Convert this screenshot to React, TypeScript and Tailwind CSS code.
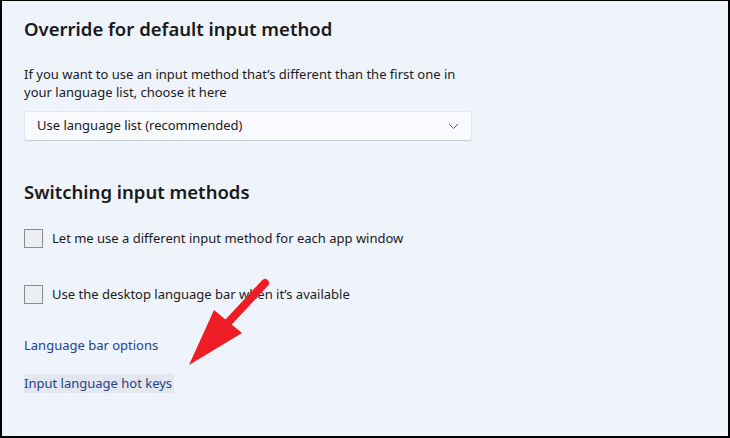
import React from "react";

function Checkbox({ label }: { label: string }) {
  return (
    <div className="flex items-center gap-[9px] h-[19px]">
      <div className="w-[19px] h-[19px] border border-[#8c8c8c] bg-[#eceef4]" />
      <span className="text-[13px] text-[#1b1b1b] leading-[19px]">{label}</span>
    </div>
  );
}

export default function App() {
  return (
    <div
      className="relative w-[730px] h-[438px] overflow-hidden bg-black pt-px pl-[2px] pr-[2px] pb-[2px]"
      style={{ fontFamily: '"Noto Sans", "Open Sans", sans-serif' }}
    >
      <div className="w-full h-full bg-[#eff3fb] pl-[22px] pt-[14px] flex flex-col">
        <h1 className="text-[18.5px] font-semibold text-[#1a1a1a] leading-[28px]">
          Override for default input method
        </h1>
        <p className="mt-[22px] text-[13px] leading-[18px] text-[#1b1b1b] w-[450px]">
          If you want to use an input method that’s different than the first one in your language list, choose it here
        </p>
        <div className="mt-[10px] w-[448px] h-[30px] bg-[#f9fafd] border border-[#e3e6ec] border-b-[#c9ccd3] rounded-[3px] flex items-center justify-between pl-[12px] pr-[12px]">
          <span className="text-[13px] text-[#1b1b1b]">Use language list (recommended)</span>
          <svg width="11" height="7" viewBox="0 0 11 7" fill="none">
            <path d="M1 1 L5.5 5.5 L10 1" stroke="#5f5f5f" strokeWidth="1" />
          </svg>
        </div>
        <h2 className="mt-[37px] text-[18.5px] font-semibold text-[#1a1a1a] leading-[28px]">
          Switching input methods
        </h2>
        <div className="mt-[23px]">
          <Checkbox label="Let me use a different input method for each app window" />
        </div>
        <div className="mt-[37px]">
          <Checkbox label="Use the desktop language bar when it’s available" />
        </div>
        <div className="mt-[31px] text-[13px] text-[#23438a] leading-[20px]">Language bar options</div>
        <div className="mt-[19px] self-start bg-[#e3e7ef] text-[13px] text-[#23438a] leading-[19px] pr-[2px]">
          Input language hot keys
        </div>
      </div>
      <svg className="absolute left-0 top-0" width="730" height="438" viewBox="0 0 730 438">
        <line x1="265" y1="283" x2="223" y2="328" stroke="#ee1c25" strokeWidth="8" strokeLinecap="round" />
        <polygon points="189,365 214,310 242,333" fill="#ee1c25" />
      </svg>
    </div>
  );
}
